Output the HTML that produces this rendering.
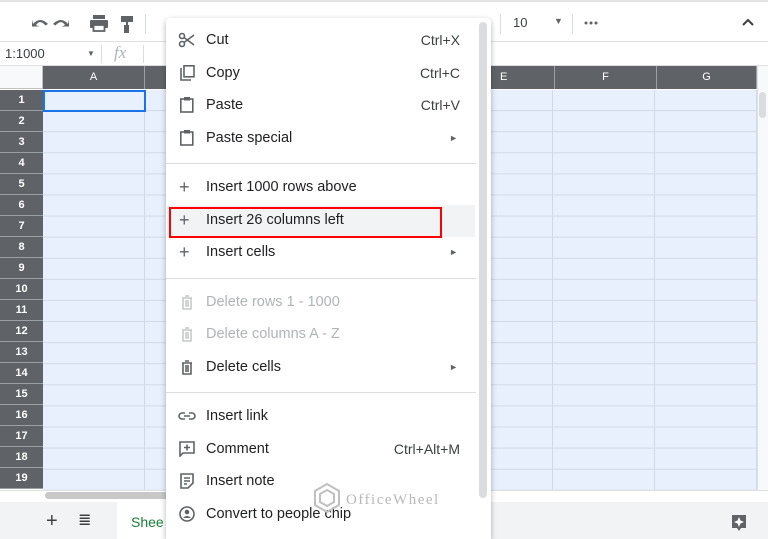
<!DOCTYPE html>
<html><head><style>
*{margin:0;padding:0;box-sizing:border-box}
html,body{width:768px;height:539px;overflow:hidden}
body{background:#fff;font-family:"Liberation Sans",Arial,sans-serif;position:relative;color:#202124}
.a{position:absolute}
.tb{top:0;left:0;width:768px;height:42px;border-top:2px solid #e3e3e3;background:#fff;border-bottom:1px solid #e0e0e0}
.fb{top:42px;left:0;width:768px;height:24px;border-bottom:1px solid #e0e0e0}
.ch{top:66px;height:23px;background:#5f6368;color:#fff;font-size:11px;text-align:center;line-height:23px;border-right:1px solid #9aa0a6}
.rh{left:0;width:43px;height:21px;background:#5f6368;color:#fff;font-size:11px;font-weight:bold;text-align:center;line-height:21px;border-bottom:1px solid #9aa0a6}
.grid{top:90px;left:43px;width:714px;height:400px;background:#e8f0fe;
background-image:linear-gradient(#d2d9e6 1px,transparent 1px),linear-gradient(90deg,#d2d9e6 1px,transparent 1px);
background-size:102px 21.1px;background-position:-1px -1px}
.menu{left:166px;top:18px;width:325px;height:521px;background:#fff;box-shadow:0 2px 6px rgba(0,0,0,.3);border-radius:4px 4px 0 0}
.it{position:absolute;left:0;width:310px;height:32px;font-size:14.5px;line-height:32px}
.it .t{position:absolute;left:40px}
.it .k{position:absolute;right:16px;font-size:14px;color:#3c4043}
.it .ar{position:absolute;right:18px;font-size:9px;color:#5f6368}
.it .ic{position:absolute;left:12px;top:8px;width:18px;height:16px}
.dis{color:#b0b3b8}
.sep{position:absolute;left:0;width:310px;height:1px;background:#dadce0}
</style></head><body>
<div class="a tb">
 <svg class="a" style="left:30px;top:12px" width="115" height="20" fill="#5f6368">
  <path d="M3 10 Q10 2 18 10 l-2.5 1.5 Q10 5 6 11 l3 1.5 h-7 v-7z"/>
  <path d="M38 10 Q31 2 23 10 l2.5 1.5 Q31 5 35 11 l-3 1.5 h7 v-7z"/>
  <rect x="60" y="6" width="18" height="8" rx="1"/><rect x="63" y="1" width="12" height="4"/><rect x="63.5" y="11" width="11" height="6" fill="#fff" stroke="#5f6368" stroke-width="1.8"/>
  <rect x="91" y="2" width="12" height="6"/><rect x="96" y="8" width="2" height="3"/><rect x="94" y="11" width="5" height="8"/>
 </svg>
 <div class="a" style="left:145px;top:12px;width:1px;height:20px;background:#dadce0"></div>
 <div class="a" style="left:500px;top:12px;width:1px;height:20px;background:#dadce0"></div>
 <div class="a" style="left:513px;top:13px;font-size:13px;color:#3c4043">10</div>
 <div class="a" style="left:554px;top:14px;font-size:9px;color:#5f6368">▼</div>
 <div class="a" style="left:572px;top:12px;width:1px;height:20px;background:#dadce0"></div>
 <svg class="a" style="left:584px;top:19px" width="14" height="5" fill="#5f6368"><circle cx="2" cy="2" r="1.5"/><circle cx="7" cy="2" r="1.5"/><circle cx="12" cy="2" r="1.5"/></svg>
 <svg class="a" style="left:741px;top:15px" width="14" height="10"><path d="M2 8 L7 3 L12 8" stroke="#3c4043" stroke-width="2" fill="none"/></svg>
</div>
<div class="a fb">
 <div class="a" style="left:5px;top:4px;font-size:13px;color:#3c4043">1:1000</div>
 <div class="a" style="left:87px;top:7px;font-size:8px;color:#5f6368">▼</div>
 <div class="a" style="left:101px;top:3px;width:1px;height:18px;background:#dadce0"></div>
 <div class="a" style="left:114px;top:1px;font-size:17px;font-style:italic;color:#b0b3b8;font-family:'Liberation Serif',serif">fx</div>
 <div class="a" style="left:143px;top:3px;width:1px;height:18px;background:#dadce0"></div>
</div>
<div class="a" style="top:66px;left:0;width:43px;height:23px;background:#f8f9fa;border-right:1px solid #c0c0c0;border-bottom:1px solid #c0c0c0"></div>
<div class="a ch" style="left:43px;width:102px">A</div>
<div class="a ch" style="left:145px;width:307px"></div>
<div class="a ch" style="left:452px;width:103px;text-align:left;padding-left:48px">E</div>
<div class="a ch" style="left:555px;width:102px">F</div>
<div class="a ch" style="left:657px;width:100px">G</div>
<div class="a" style="top:66px;left:757px;width:11px;height:424px;background:#f8f9fa;border-left:1px solid #e0e0e0"></div>
<div class="a" style="top:92px;left:759px;width:7px;height:26px;background:#dadce0;border-radius:4px"></div>
<div class="a grid"></div>
<div class="a" style="left:43px;top:90px;width:103px;height:22px;border:2px solid #1a73e8"></div>
<div class="a" style="left:0;top:90px">
<div class="a rh" style="top:0">1</div><div class="a rh" style="top:21px">2</div><div class="a rh" style="top:42px">3</div><div class="a rh" style="top:63px">4</div><div class="a rh" style="top:84px">5</div><div class="a rh" style="top:105px">6</div><div class="a rh" style="top:126px">7</div><div class="a rh" style="top:147px">8</div><div class="a rh" style="top:168px">9</div><div class="a rh" style="top:189px">10</div><div class="a rh" style="top:210px">11</div><div class="a rh" style="top:231px">12</div><div class="a rh" style="top:252px">13</div><div class="a rh" style="top:273px">14</div><div class="a rh" style="top:294px">15</div><div class="a rh" style="top:315px">16</div><div class="a rh" style="top:336px">17</div><div class="a rh" style="top:357px">18</div><div class="a rh" style="top:378px">19</div>
</div>
<div class="a" style="left:0;top:490px;width:768px;height:12px;background:#fff;border-top:1px solid #e0e0e0"></div>
<div class="a" style="left:45px;top:492px;width:150px;height:7px;background:#c8c8c8;border-radius:4px"></div>
<div class="a" style="left:0;top:502px;width:768px;height:37px;background:#f1f3f4"></div>
<div class="a" style="left:46px;top:510px;font-size:20px;color:#3c4043">+</div>
<div class="a" style="left:78px;top:510px;font-size:16px;color:#3c4043">≣</div>
<div class="a" style="left:117px;top:502px;width:60px;height:37px;background:#fff"></div>
<div class="a" style="left:131px;top:514px;font-size:14px;color:#188038">Shee</div>
<svg class="a" style="left:730px;top:513px" width="18" height="20"><path d="M2 2 h14 v13 h-5 l-2 3 l-2 -3 h-5z" fill="#5f6368"/><path d="M9 4 l1.5 3.5 l3.5 1.5 l-3.5 1.5 l-1.5 3.5 l-1.5 -3.5 l-3.5 -1.5 l3.5 -1.5z" fill="#fff"/></svg>

<div class="a menu">
 <div class="a" style="left:313px;top:4px;width:8px;height:476px;background:#dadce0;border-radius:4px"></div>
 <div class="it" style="top:6px"><svg class="ic" viewBox="0 0 18 16"><circle cx="4" cy="4" r="2.5" fill="none" stroke="#5f6368" stroke-width="1.6"/><circle cx="4" cy="12" r="2.5" fill="none" stroke="#5f6368" stroke-width="1.6"/><path d="M6 5.5 L16 13 M6 10.5 L16 3" stroke="#5f6368" stroke-width="1.6"/></svg><span class="t">Cut</span><span class="k">Ctrl+X</span></div>
 <div class="it" style="top:39px"><svg class="ic" viewBox="0 0 18 16"><path d="M3 3 v12 h10" fill="none" stroke="#5f6368" stroke-width="1.6"/><rect x="6" y="0.8" width="10" height="11" fill="none" stroke="#5f6368" stroke-width="1.6"/></svg><span class="t">Copy</span><span class="k">Ctrl+C</span></div>
 <div class="it" style="top:71px"><svg class="ic" viewBox="0 0 18 16"><rect x="2.8" y="2" width="12" height="13" fill="none" stroke="#5f6368" stroke-width="1.6"/><rect x="6" y="0" width="6" height="3.5" fill="#5f6368"/></svg><span class="t">Paste</span><span class="k">Ctrl+V</span></div>
 <div class="it" style="top:104px"><svg class="ic" viewBox="0 0 18 16"><rect x="2.8" y="2" width="12" height="13" fill="none" stroke="#5f6368" stroke-width="1.6"/><rect x="6" y="0" width="6" height="3.5" fill="#5f6368"/></svg><span class="t">Paste special</span><span class="ar">►</span></div>
 <div class="sep" style="top:145px"></div>
 <div class="it" style="top:153px"><span class="a" style="left:13px;font-size:18px;color:#5f6368">+</span><span class="t">Insert 1000 rows above</span></div>
 <div class="a" style="left:1px;top:187px;width:308px;height:32px;background:#f1f3f4"></div>
 <div class="it" style="top:186px"><span class="a" style="left:13px;font-size:18px;color:#5f6368">+</span><span class="t">Insert 26 columns left</span></div>
 <div class="a" style="left:3px;top:189px;width:273px;height:31px;border:2px solid #f00"></div>
 <div class="it" style="top:218px"><span class="a" style="left:13px;font-size:18px;color:#5f6368">+</span><span class="t">Insert cells</span><span class="ar">►</span></div>
 <div class="sep" style="top:260px"></div>
 <div class="it dis" style="top:268px"><svg class="ic" viewBox="0 0 18 16"><path d="M4 4 h10 M7 2 h4 M5 4 v11 h8 v-11 M8 6 v7 M10 6 v7" fill="none" stroke="#c4c7c5" stroke-width="1.5"/></svg><span class="t">Delete rows 1 - 1000</span></div>
 <div class="it dis" style="top:300px"><svg class="ic" viewBox="0 0 18 16"><path d="M4 4 h10 M7 2 h4 M5 4 v11 h8 v-11 M8 6 v7 M10 6 v7" fill="none" stroke="#c4c7c5" stroke-width="1.5"/></svg><span class="t">Delete columns A - Z</span></div>
 <div class="it" style="top:333px"><svg class="ic" viewBox="0 0 18 16"><path d="M4 4 h10 M7 2 h4 M5 4 v11 h8 v-11 M8 6 v7 M10 6 v7" fill="none" stroke="#5f6368" stroke-width="1.6"/></svg><span class="t">Delete cells</span><span class="ar">►</span></div>
 <div class="sep" style="top:374px"></div>
 <div class="it" style="top:382px"><svg class="ic" viewBox="0 0 18 16"><path d="M7 5 h-3 a3 3 0 0 0 0 6 h3 M11 5 h3 a3 3 0 0 1 0 6 h-3 M6 8 h6" fill="none" stroke="#5f6368" stroke-width="1.6"/></svg><span class="t">Insert link</span></div>
 <div class="it" style="top:415px"><svg class="ic" viewBox="0 0 18 16"><path d="M2 1 h14 v11 h-11 l-3 3z" fill="none" stroke="#5f6368" stroke-width="1.6"/><path d="M9 3.5 v6 M6 6.5 h6" stroke="#5f6368" stroke-width="1.6"/></svg><span class="t">Comment</span><span class="k">Ctrl+Alt+M</span></div>
 <div class="it" style="top:447px"><svg class="ic" viewBox="0 0 18 16"><path d="M3 1 h12 v9 l-5 5 h-7z" fill="none" stroke="#5f6368" stroke-width="1.6"/><path d="M6 5 h6 M6 8 h6 M6 11 h3" stroke="#5f6368" stroke-width="1.4"/></svg><span class="t">Insert note</span></div>
 <div class="it" style="top:480px"><svg class="ic" viewBox="0 0 18 16"><circle cx="9" cy="8" r="7" fill="none" stroke="#5f6368" stroke-width="1.6"/><circle cx="9" cy="6" r="2.3" fill="#5f6368"/><path d="M5 12 q4 -4 8 0" fill="#5f6368"/></svg><span class="t">Convert to people chip</span></div>
 <svg class="a" style="left:146px;top:464px" width="30" height="32"><path d="M15 2 L27 9 V23 L15 30 L3 23 V9z M15 8 L22 12 V20 L15 24 L8 20 V12z" fill="none" stroke="#c0c0c0" stroke-width="2"/></svg>
 <div class="a" style="left:180px;top:474px;font-family:'Liberation Serif',serif;font-size:15px;letter-spacing:1.5px;color:#b8b8b8">OfficeWheel</div>
</div>
</body></html>
